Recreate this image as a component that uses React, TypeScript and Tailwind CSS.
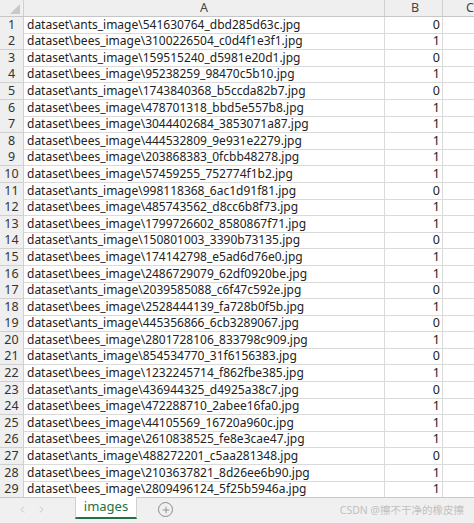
import { Plus, ChevronLeft, ChevronRight } from "lucide-react";

// rows of the "images" sheet: path in A, label in B
const rows: [string, number][] = [
  ["dataset\\ants_image\\541630764_dbd285d63c.jpg", 0],
  ["dataset\\bees_image\\3100226504_c0d4f1e3f1.jpg", 1],
  ["dataset\\ants_image\\159515240_d5981e20d1.jpg", 0],
  ["dataset\\bees_image\\95238259_98470c5b10.jpg", 1],
  ["dataset\\ants_image\\1743840368_b5ccda82b7.jpg", 0],
  ["dataset\\bees_image\\478701318_bbd5e557b8.jpg", 1],
  ["dataset\\bees_image\\3044402684_3853071a87.jpg", 1],
  ["dataset\\bees_image\\444532809_9e931e2279.jpg", 1],
  ["dataset\\bees_image\\203868383_0fcbb48278.jpg", 1],
  ["dataset\\bees_image\\57459255_752774f1b2.jpg", 1],
  ["dataset\\ants_image\\998118368_6ac1d91f81.jpg", 0],
  ["dataset\\bees_image\\485743562_d8cc6b8f73.jpg", 1],
  ["dataset\\bees_image\\1799726602_8580867f71.jpg", 1],
  ["dataset\\ants_image\\150801003_3390b73135.jpg", 0],
  ["dataset\\bees_image\\174142798_e5ad6d76e0.jpg", 1],
  ["dataset\\bees_image\\2486729079_62df0920be.jpg", 1],
  ["dataset\\ants_image\\2039585088_c6f47c592e.jpg", 0],
  ["dataset\\bees_image\\2528444139_fa728b0f5b.jpg", 1],
  ["dataset\\ants_image\\445356866_6cb3289067.jpg", 0],
  ["dataset\\bees_image\\2801728106_833798c909.jpg", 1],
  ["dataset\\ants_image\\854534770_31f6156383.jpg", 0],
  ["dataset\\bees_image\\1232245714_f862fbe385.jpg", 1],
  ["dataset\\ants_image\\436944325_d4925a38c7.jpg", 0],
  ["dataset\\bees_image\\472288710_2abee16fa0.jpg", 1],
  ["dataset\\bees_image\\44105569_16720a960c.jpg", 1],
  ["dataset\\bees_image\\2610838525_fe8e3cae47.jpg", 1],
  ["dataset\\ants_image\\488272201_c5aa281348.jpg", 0],
  ["dataset\\bees_image\\2103637821_8d26ee6b90.jpg", 1],
  ["dataset\\bees_image\\2809496124_5f25b5946a.jpg", 1],
];

const cols = "grid grid-cols-[24px_361px_58px_1fr]";

export default function App() {
  return (
    <div
      className="flex h-[523px] w-[474px] flex-col overflow-hidden bg-white text-[12px] text-[#222]"
      style={{ fontFamily: '"Noto Sans", "Noto Sans CJK SC", sans-serif' }}
    >
      {/* column header */}
      <div className={`${cols} h-[16.6px] shrink-0 border-b border-[#c6c6c6] bg-[#efefef] text-[12.5px] leading-[16px] text-[#444]`}>
        <div className="relative border-r border-[#d0d0d0]">
          <div className="absolute bottom-[2px] right-[3px] h-0 w-0 border-b-[10px] border-l-[10px] border-b-[#c8c8c8] border-l-transparent" />
        </div>
        <div className="border-r border-[#d0d0d0] text-center">A</div>
        <div className="border-r border-[#d0d0d0] pl-[26px]">B</div>
        <div className="pl-[23px]">C</div>
      </div>

      {/* cells */}
      <div className="flex-1 overflow-hidden">
        {rows.map(([path, label], i) => (
          <div key={i} className={`${cols} h-[16.6px] leading-[16px]`}>
            <div className="border-r border-b border-[#d0d0d0] bg-[#efefef] text-center text-[12.5px] text-[#333]">{i + 1}</div>
            <div className="whitespace-nowrap border-r border-b border-[#dadada] pl-[3px]">{path}</div>
            <div className="border-r border-b border-[#dadada] pr-[2px] text-right text-[12.5px]">{label}</div>
            <div className="border-b border-[#dadada]" />
          </div>
        ))}
      </div>

      {/* sheet tabs */}
      <div className="flex h-[26px] shrink-0 items-start border-t border-[#c8c8c8] bg-[#f0f0f0]">
        <div className="flex w-[75px] items-center gap-[8px] pl-[17px] pt-[6px] text-[#c4c4c4]">
          <ChevronLeft size={11} strokeWidth={2} />
          <ChevronRight size={11} strokeWidth={2} />
        </div>
        <div className="-mt-px flex h-[22px] w-[62px] items-center justify-center border-x border-b-[2px] border-x-[#d0d0d0] border-b-[#217346] bg-white text-[13px] text-[#217346]">
          images
        </div>
        <div className="ml-[21px] mt-[4px] flex h-[15px] w-[15px] items-center justify-center rounded-full border border-[#8a8a8a] text-[#6a6a6a]">
          <Plus size={10} strokeWidth={1.6} />
        </div>
        <div className="ml-auto mr-[10px] mt-[5px] text-[10.5px] text-[#c0c0c0]">CSDN @擦不干净的橡皮擦</div>
      </div>
    </div>
  );
}
